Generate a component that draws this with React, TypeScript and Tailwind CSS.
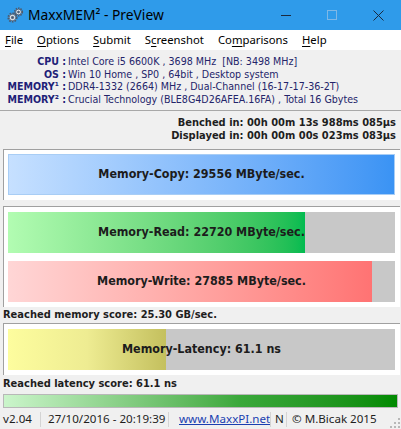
import React from "react";

const tahoma = { fontFamily: '"DejaVu Sans Condensed", "Liberation Sans", sans-serif' };

const info = [
  ["CPU :", "Intel Core i5 6600K , 3698 MHz  [NB: 3498 MHz]"],
  ["OS :", "Win 10 Home , SP0 , 64bit , Desktop system"],
  ["MEMORY¹ :", "DDR4-1332 (2664) MHz , Dual-Channel (16-17-17-36-2T)"],
  ["MEMORY² :", "Crucial Technology (BLE8G4D26AFEA.16FA) , Total 16 Gbytes"],
];

function Gears() {
  return (
    <svg width="17" height="16" viewBox="0 0 17 16">
      <g fill="#e8eef4" stroke="#4a5a70" strokeWidth="0.8">
        <circle cx="5.5" cy="10.5" r="4" strokeDasharray="1.6 1" strokeWidth="2.2" fill="none" />
        <circle cx="5.5" cy="10.5" r="3.2" />
        <circle cx="5.5" cy="10.5" r="1.2" fill="#4a5a70" />
        <circle cx="11.5" cy="5" r="3.6" strokeDasharray="1.4 0.9" strokeWidth="2" fill="none" />
        <circle cx="11.5" cy="5" r="2.8" />
        <circle cx="11.5" cy="5" r="1" fill="#4a5a70" />
      </g>
    </svg>
  );
}

function Menu({ label, u }: { label: string; u: number }) {
  return (
    <span>
      {label.slice(0, u)}
      <u className="underline-offset-2">{label[u]}</u>
      {label.slice(u + 1)}
    </span>
  );
}

function Bar({
  label,
  pct,
  fill,
}: {
  label: string;
  pct: number;
  fill: string;
}) {
  return (
    <div className="relative h-[41px] bg-[#c8c8c8]">
      <div className={`h-full ${fill}`} style={{ width: `${pct}%` }} />
      <div
        className="absolute inset-0 flex items-center justify-center text-[12.4px] font-bold text-[#1c1c1c]"
        style={tahoma}
      >
        {label}
      </div>
    </div>
  );
}

export default function App() {
  return (
    <div
      className="w-[401px] h-[429px] overflow-hidden bg-[#f0f0f0] flex flex-col"
      style={{ fontFamily: '"Noto Sans", "Open Sans", sans-serif' }}
    >
      {/* Title bar */}
      <div className="h-[30px] bg-[#2f9bea] flex items-center shrink-0">
        <div className="pl-[7px] flex items-center">
          <Gears />
        </div>
        <span className="ml-[4px] text-[13.8px] text-black">MaxxMEM² - PreView</span>
        <div className="ml-auto flex h-full">
          <div className="w-[46px] flex items-center justify-center">
            <div className="w-[10px] h-[1px] bg-[#1a2a40]" />
          </div>
          <div className="w-[46px] flex items-center justify-center">
            <div className="w-[10px] h-[10px] border border-[#7fb8e6]" />
          </div>
          <div className="w-[46px] flex items-center justify-center">
            <svg width="11" height="11" viewBox="0 0 11 11">
              <path d="M0.5 0.5L10.5 10.5M10.5 0.5L0.5 10.5" stroke="#1a2a40" strokeWidth="1" />
            </svg>
          </div>
        </div>
      </div>

      {/* Menu bar */}
      <div className="h-[20px] bg-white flex items-center gap-[14px] pl-[5px] text-[11.3px] text-black shrink-0">
        <Menu label="File" u={0} />
        <Menu label="Options" u={0} />
        <Menu label="Submit" u={0} />
        <Menu label="Screenshot" u={1} />
        <Menu label="Comparisons" u={2} />
        <Menu label="Help" u={0} />
      </div>

      {/* System info */}
      <div className="pt-[5px] pb-[3px] text-[10.6px] leading-[12.5px] text-[#24246a]" style={tahoma}>
        {info.map(([k, v]) => (
          <div key={k} className="flex whitespace-pre">
            <span className="w-[66px] text-right font-bold text-[#1f1f78]">{k}</span>
            <span className="pl-[2px]">{v}</span>
          </div>
        ))}
      </div>

      <div className="h-px bg-[#a8a8a8] mt-[2px]" />

      <div
        className="pt-[5px] pr-[5px] text-right text-[11px] leading-[13px] font-bold text-[#1e1e1e]"
        style={tahoma}
      >
        <div>Benched in: 00h 00m 13s 988ms 085µs</div>
        <div>Displayed in: 00h 00m 00s 023ms 083µs</div>
      </div>

      {/* Copy */}
      <div className="mt-[7px] ml-[3px] mr-px border-t border-l border-[#a0a0a0] bg-white pt-[4px] pl-[4px] pr-[5px] pb-[5px]">
        <div className="relative h-[41px] border border-[#a8cdf5] bg-linear-to-r from-[#c6e0ff] to-[#3a93f4] flex items-center justify-center">
          <span className="text-[12.4px] font-bold text-[#1c1c1c]" style={tahoma}>
            Memory-Copy: 29556 MByte/sec.
          </span>
        </div>
      </div>

      {/* Read / Write */}
      <div className="mt-[6px] ml-[3px] mr-px border-t border-l border-[#a0a0a0] bg-white pt-[5px] pl-[4px] pr-[5px] pb-[5px] flex flex-col gap-[8px]">
        <Bar
          label="Memory-Read: 22720 MByte/sec."
          pct={76.7}
          fill="bg-linear-to-r from-[#b2fcb2] to-[#00bb50]"
        />
        <Bar
          label="Memory-Write: 27885 MByte/sec."
          pct={94}
          fill="bg-linear-to-r from-[#ffd6d6] to-[#ff7373]"
        />
      </div>

      <div className="pl-[3px] text-[11px] leading-[14px] font-bold text-[#1e1e1e] pt-px" style={tahoma}>
        Reached memory score: 25.30 GB/sec.
      </div>

      {/* Latency */}
      <div className="mt-px ml-[3px] mr-px border-t border-l border-[#a0a0a0] bg-white pt-[5px] pl-[4px] pr-[5px] pb-[5px]">
        <Bar
          label="Memory-Latency: 61.1 ns"
          pct={40.7}
          fill="bg-linear-to-r from-[#fdfd9e] via-[#eeec92] to-[#c4c05e]"
        />
      </div>

      <div className="pl-[3px] text-[11px] leading-[14px] font-bold text-[#1e1e1e] pt-[2px]" style={tahoma}>
        Reached latency score: 61.1 ns
      </div>

      <div className="mt-[3px] mx-[3px] h-[14px] border border-[#b8b8b8] bg-linear-to-r from-[#cbf5cb] via-[#3aa83a] via-60% to-[#008a00]" />

      {/* Status bar */}
      <div className="mt-auto h-[20px] flex items-center text-[11.6px] text-[#1e1e1e] relative whitespace-nowrap">
        <span className="w-[40px] pl-[3px]">v2.04</span>
        <div className="w-px h-[15px] bg-[#d4d4d4]" />
        <span className="w-[127px] pl-[7px]">27/10/2016 - 20:19:39</span>
        <div className="w-px h-[15px] bg-[#d4d4d4]" />
        <span className="w-[101px] pl-[10px] text-[#1a3fb0] underline underline-offset-1">www.MaxxPI.net</span>
        <div className="w-px h-[15px] bg-[#d4d4d4]" />
        <span className="w-[15px] pl-[4px]">N</span>
        <div className="w-px h-[15px] bg-[#d4d4d4]" />
        <span className="pl-[5px]">© M.Bicak 2015</span>
        <svg className="absolute right-[1px] bottom-[1px]" width="10" height="10" viewBox="0 0 10 10">
          <g fill="#b8b8b8">
            <rect x="8" y="0" width="2" height="2" />
            <rect x="4" y="4" width="2" height="2" />
            <rect x="8" y="4" width="2" height="2" />
            <rect x="0" y="8" width="2" height="2" />
            <rect x="4" y="8" width="2" height="2" />
            <rect x="8" y="8" width="2" height="2" />
          </g>
        </svg>
      </div>
    </div>
  );
}
